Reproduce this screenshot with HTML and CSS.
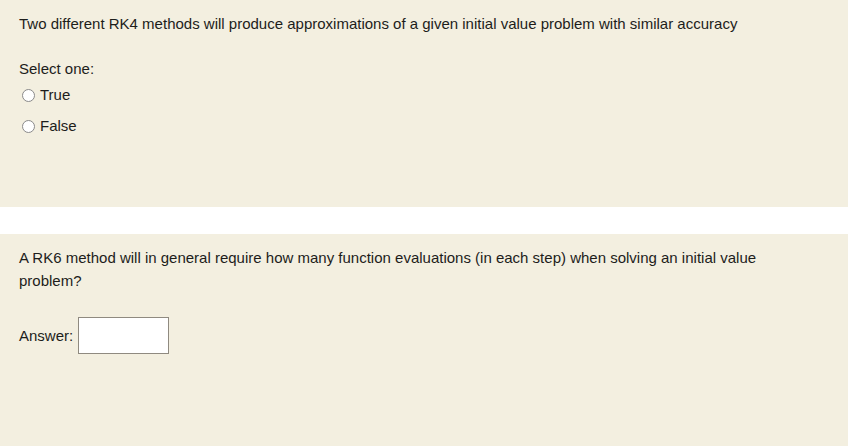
FILE: index.html
```html
<!DOCTYPE html>
<html>
<head>
<meta charset="utf-8">
<link rel="stylesheet" href="styles.css">
</head>
<body>
<div class="que">
  <div class="qtext">Two different RK4 methods will produce approximations of a given initial value problem with similar accuracy</div>
  <div class="prompt">Select one:</div>
  <div class="answers">
    <label class="opt"><span class="radio"></span><span>True</span></label>
    <label class="opt"><span class="radio"></span><span>False</span></label>
  </div>
</div>
<div class="gap"></div>
<div class="que que2">
  <div class="qtext">A RK6 method will in general require how many function evaluations (in each step) when solving an initial value problem?</div>
  <div class="answer-row">
    <span>Answer:</span>
    <span class="box"></span>
  </div>
</div>
</body>
</html>
```
FILE: styles.css
```css
html, body {
  margin: 0;
  padding: 0;
  background: #ffffff;
}
body {
  font-family: "Liberation Sans", Arial, sans-serif;
  font-size: 15px;
  color: #1d1d1b;
  width: 848px;
  height: 446px;
  overflow: hidden;
}
.que {
  background: #f3efe0;
  padding: 12px 18px 0 19px;
  height: 195px;
}
.qtext {
  line-height: 23px;
  max-width: 780px;
}
.prompt {
  margin-top: 25px;
  line-height: 18px;
}
.answers {
  display: flex;
  flex-direction: column;
  gap: 13px;
  margin-top: 8px;
  padding-left: 3px;
}
.opt {
  display: flex;
  align-items: center;
  gap: 5px;
  line-height: 18px;
}
.radio {
  width: 11px;
  height: 11px;
  border-radius: 50%;
  border: 1px solid #8a8a8a;
  background: #ffffff;
}
.gap {
  height: 27px;
}
.que2 {
  padding-top: 12px;
  height: 200px;
}
.answer-row {
  margin-top: 25px;
  display: flex;
  align-items: center;
  gap: 5px;
}
.box {
  width: 89px;
  height: 35px;
  border: 1px solid #8f8a80;
  background: #ffffff;
}
```
